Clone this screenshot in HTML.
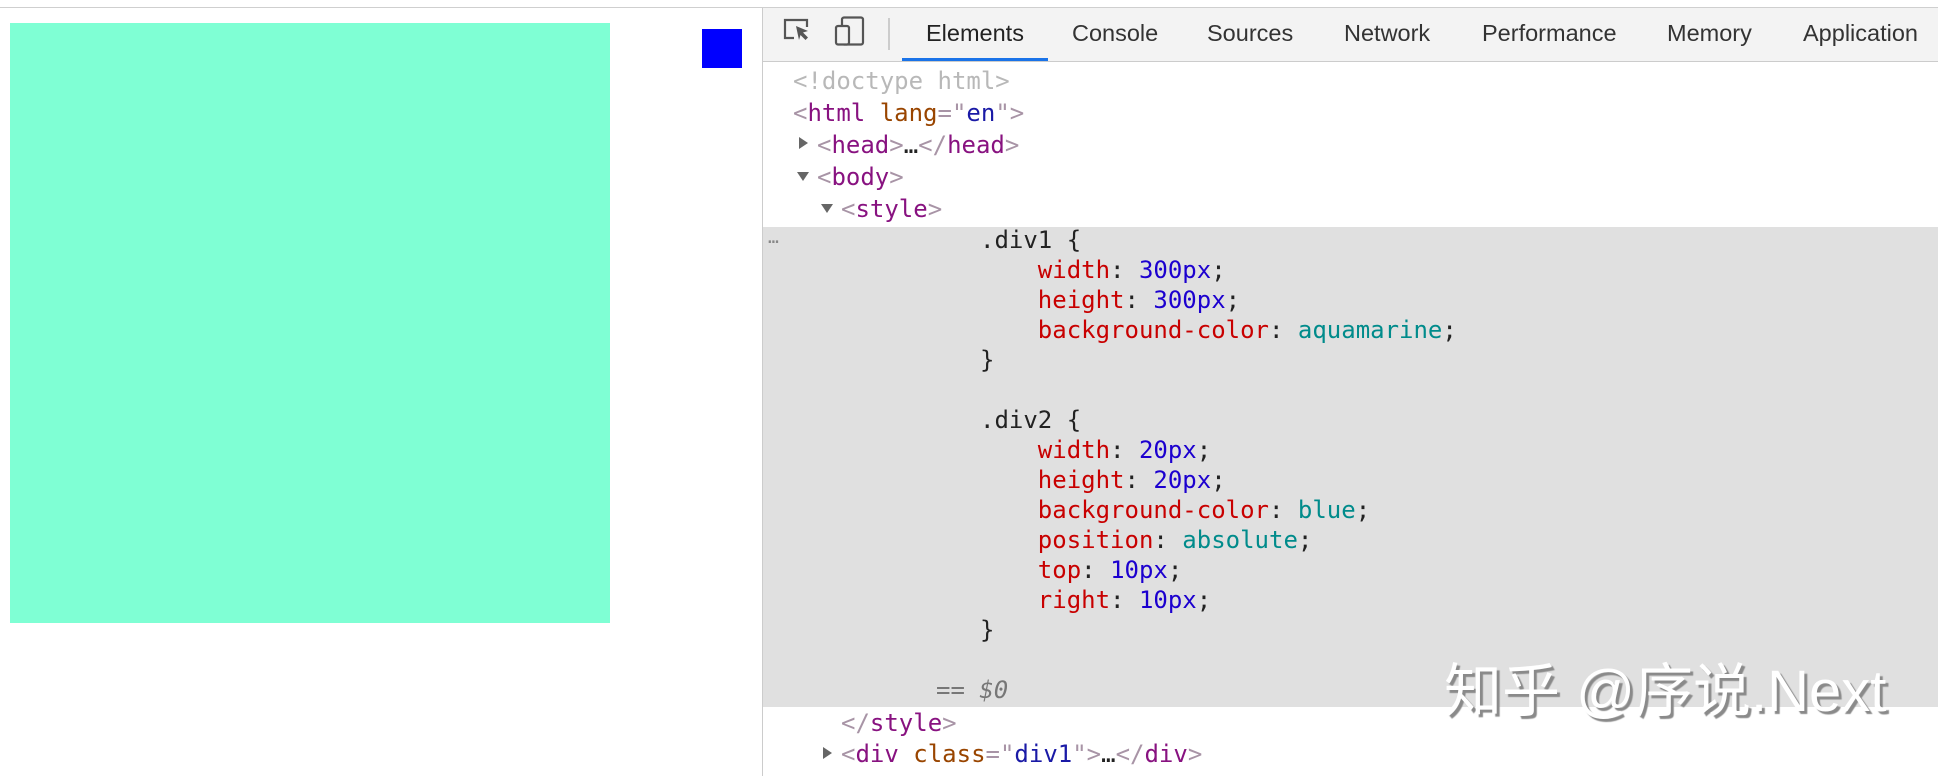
<!DOCTYPE html>
<html><head><style>
body{margin:0;width:1938px;height:776px;background:#fff;position:relative;overflow:hidden;font-family:"Liberation Sans",sans-serif}
.a{position:absolute}
.l{position:absolute;font-family:"DejaVu Sans Mono","Liberation Mono",monospace;font-size:24px;line-height:30px;white-space:pre;color:#222}
.t{color:#881280}.b{color:#a894a6}.n{color:#994500}.v{color:#1a1aa6}
.p{color:#c80000}.num{color:#1c00cf}.k{color:#008b8b}
.tab{position:absolute;top:20px;font-size:23.5px;color:#333}
.tri{position:absolute;width:0;height:0}
</style></head><body>
<div class="a" style="left:0;top:7px;width:1938px;height:1px;background:#cfcfcf"></div>
<div class="a" style="left:10px;top:23px;width:600px;height:600px;background:#7fffd4"></div>
<div class="a" style="left:702px;top:29px;width:40px;height:39px;background:#0000ff"></div>
<div class="a" style="left:762px;top:8px;width:1px;height:768px;background:#ccc"></div>
<div class="a" style="left:763px;top:8px;width:1175px;height:53px;background:#f3f3f3;border-bottom:1px solid #ccc"></div>
<svg class="a" style="left:782px;top:16px" width="32" height="28" viewBox="0 0 32 28"><path d="M12 22H3V4h22v7" fill="none" stroke="#555" stroke-width="2.2"/><path d="M14 10l12 5-5 1.5 5 5-2.5 2.5-5-5-1.5 5z" fill="#555"/></svg>
<svg class="a" style="left:834px;top:16px" width="34" height="30" viewBox="0 0 34 30"><rect x="8" y="1.5" width="21" height="27" rx="2" fill="none" stroke="#555" stroke-width="2.2"/><rect x="2" y="10" width="13" height="18.5" rx="2" fill="#f3f3f3" stroke="#555" stroke-width="2.2"/></svg>
<div class="a" style="left:888px;top:18px;width:2px;height:32px;background:#ccc"></div>
<div class="tab" style="left:926px;color:#222">Elements</div>
<div class="tab" style="left:1072px">Console</div>
<div class="tab" style="left:1207px">Sources</div>
<div class="tab" style="left:1344px">Network</div>
<div class="tab" style="left:1482px">Performance</div>
<div class="tab" style="left:1667px">Memory</div>
<div class="tab" style="left:1803px">Application</div>
<div class="a" style="left:902px;top:58px;width:146px;height:3px;background:#1a73e8"></div>

<div class="a" style="left:763px;top:227px;width:1175px;height:480px;background:#e0e0e0"></div>
<div class="l" style="left:768px;top:223px;color:#888;font-size:18px">…</div>

<div class="l" style="left:793px;top:66px;color:#b8b8b8">&lt;!doctype html&gt;</div>
<div class="l" style="left:793px;top:98px"><span class="b">&lt;</span><span class="t">html</span> <span class="n">lang</span><span class="b">="</span><span class="v">en</span><span class="b">"&gt;</span></div>
<div class="tri" style="left:799px;top:137px;border-left:9px solid #666;border-top:6px solid transparent;border-bottom:6px solid transparent"></div>
<div class="l" style="left:817px;top:130px"><span class="b">&lt;</span><span class="t">head</span><span class="b">&gt;</span>…<span class="b">&lt;/</span><span class="t">head</span><span class="b">&gt;</span></div>
<div class="tri" style="left:797px;top:172px;border-top:9px solid #666;border-left:6px solid transparent;border-right:6px solid transparent"></div>
<div class="l" style="left:817px;top:162px"><span class="b">&lt;</span><span class="t">body</span><span class="b">&gt;</span></div>
<div class="tri" style="left:821px;top:204px;border-top:9px solid #666;border-left:6px solid transparent;border-right:6px solid transparent"></div>
<div class="l" style="left:841px;top:194px"><span class="b">&lt;</span><span class="t">style</span><span class="b">&gt;</span></div>

<div class="l" style="left:980px;top:225px">.div1 {
    <span class="p">width</span>: <span class="num">300px</span>;
    <span class="p">height</span>: <span class="num">300px</span>;
    <span class="p">background-color</span>: <span class="k">aquamarine</span>;
}

.div2 {
    <span class="p">width</span>: <span class="num">20px</span>;
    <span class="p">height</span>: <span class="num">20px</span>;
    <span class="p">background-color</span>: <span class="k">blue</span>;
    <span class="p">position</span>: <span class="k">absolute</span>;
    <span class="p">top</span>: <span class="num">10px</span>;
    <span class="p">right</span>: <span class="num">10px</span>;
}</div>
<div class="l" style="left:936px;top:675px;color:#777">== <i>$0</i></div>
<div class="l" style="left:841px;top:708px"><span class="b">&lt;/</span><span class="t">style</span><span class="b">&gt;</span></div>
<div class="tri" style="left:823px;top:747px;border-left:9px solid #666;border-top:6px solid transparent;border-bottom:6px solid transparent"></div>
<div class="l" style="left:841px;top:739px"><span class="b">&lt;</span><span class="t">div</span> <span class="n">class</span><span class="b">="</span><span class="v">div1</span><span class="b">"&gt;</span>…<span class="b">&lt;/</span><span class="t">div</span><span class="b">&gt;</span></div>

<div class="a" style="left:1444px;top:658px;font-family:'Liberation Sans','Noto Sans CJK SC',sans-serif;font-size:58px;line-height:68px;color:#fff;text-shadow:3px 3px 1px #8a8a8a;white-space:nowrap">知乎 @序说.Next</div>
</body></html>
